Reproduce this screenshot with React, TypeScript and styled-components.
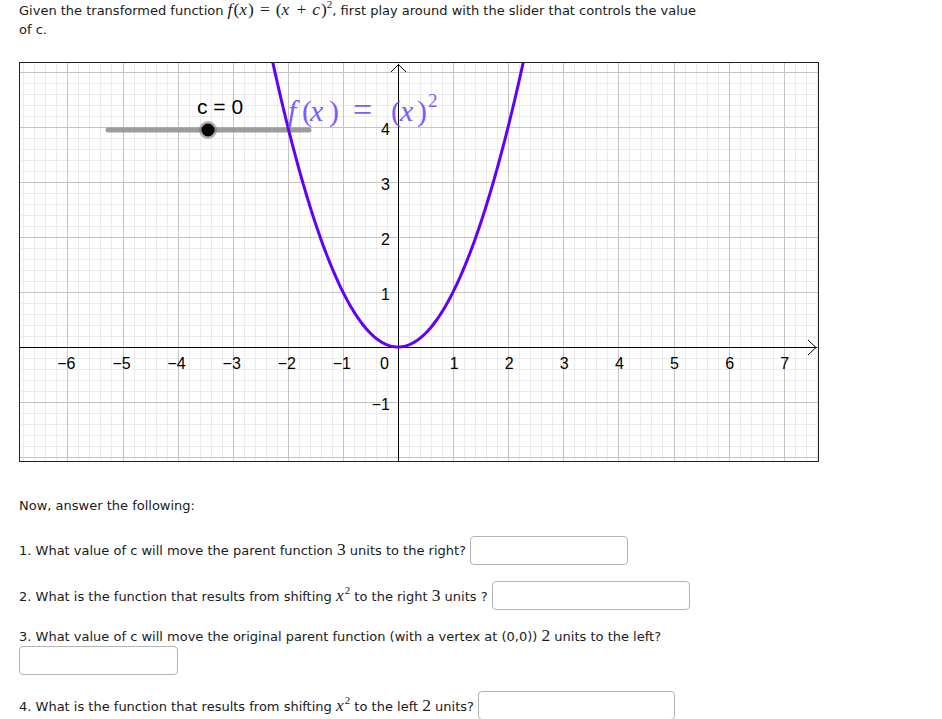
import React from 'react';
import styled, { createGlobalStyle } from 'styled-components';

const GlobalStyle = createGlobalStyle`
  html, body {
    margin: 0;
    padding: 0;
    background: #fff;
  }
  body {
    font-family: "DejaVu Sans", Verdana, sans-serif;
    font-size: 13px;
    color: #1a1a1a;
  }
`;

// graph geometry (inside the 1px border)
const W = 798;
const H = 398;
const OX = 378;
const OY = 284;
const U = 55.1;

const Page = styled.div`
  padding: 0 19px;
  width: 904px;
`;

const Para = styled.p`
  margin: 0;
  line-height: 19px;
`;

const Intro = styled(Para)`
  width: 685px;
  margin-top: -1px;
`;

const MathText = styled.span`
  font-family: "Liberation Serif", "Times New Roman", serif;
  font-size: 17.5px;
  line-height: 1;
`;

const MathVar = styled.i`
  font-family: "Liberation Serif", "Times New Roman", serif;
  font-size: 17.5px;
  line-height: 1;
  padding-right: 1px;
`;

const Op = styled.span`
  font-family: "Liberation Serif", "Times New Roman", serif;
  font-size: 17.5px;
  line-height: 1;
  margin: 0 6px;
`;

const Sup = styled.sup`
  font-family: "Liberation Serif", "Times New Roman", serif;
  font-size: 11px;
  line-height: 1;
  vertical-align: 7px;
`;

const GraphBox = styled.div`
  margin-top: 23px;
  width: ${W}px;
  height: ${H}px;
  border: 1px solid #222;
  background: #fff;
  line-height: 0;
`;

const Heading = styled(Para)`
  margin-top: 34px;
`;

const QuestionRow = styled.div<{ $stack?: boolean; $gap: number }>`
  display: flex;
  flex-direction: ${(p) => (p.$stack ? 'column' : 'row')};
  align-items: ${(p) => (p.$stack ? 'flex-start' : 'center')};
  gap: ${(p) => (p.$stack ? 0 : 4)}px;
  margin-top: ${(p) => p.$gap}px;
  line-height: 19px;
`;

const AnswerInput = styled.input<{ $w: number }>`
  width: ${(p) => p.$w}px;
  height: 29px;
  box-sizing: border-box;
  border: 1px solid #b4b4b4;
  border-radius: 4px;
  background: #fff;
  padding: 0 6px;
  margin: 0;
  font: inherit;
`;

const SANS = '"Liberation Sans", Arial, sans-serif';
const SERIF = '"Liberation Serif", "Times New Roman", serif';

const Graph: React.FC = () => {
  const step = U / 5;
  const minor: React.ReactNode[] = [];
  const major: React.ReactNode[] = [];
  for (let i = Math.ceil(-OX / step); OX + i * step <= W; i++) {
    const x = Math.round(OX + i * step) + 0.5;
    const isMajor = i % 5 === 0;
    const el = <line key={`v${i}`} x1={x} y1={0} x2={x} y2={H} stroke={isMajor ? '#c4c4c4' : '#ebebeb'} />;
    (isMajor ? major : minor).push(el);
  }
  for (let j = Math.ceil(-OY / step); OY + j * step <= H; j++) {
    const y = Math.round(OY + j * step) + 0.5;
    const isMajor = j % 5 === 0;
    const el = <line key={`h${j}`} x1={0} y1={y} x2={W} y2={y} stroke={isMajor ? '#c4c4c4' : '#ebebeb'} />;
    (isMajor ? major : minor).push(el);
  }

  const pts: string[] = [];
  for (let px = 240; px <= 520; px += 1) {
    const x = (px - OX) / U;
    const y = OY - x * x * U;
    if (y < -10) continue;
    pts.push(`${px},${y.toFixed(2)}`);
  }

  const xLabels = [-6, -5, -4, -3, -2, -1, 1, 2, 3, 4, 5, 6, 7];
  const yLabels = [3, 2, 1, -1];
  const fmt = (n: number) => (n < 0 ? `\u2212${-n}` : `${n}`);

  return (
    <svg width={W} height={H} viewBox={`0 0 ${W} ${H}`}>
      <g>{minor}</g>
      <g>{major}</g>
      {/* axes */}
      <line x1={0} y1={OY + 0.5} x2={W - 1} y2={OY + 0.5} stroke="#000" />
      <line x1={OX + 0.5} y1={1} x2={OX + 0.5} y2={H} stroke="#000" />
      <polyline points={`${W - 10},${OY - 7} ${W - 2},${OY + 0.5} ${W - 10},${OY + 8}`} fill="none" stroke="#000" />
      <polyline points={`${OX - 7},9 ${OX + 0.5},1.5 ${OX + 8},9`} fill="none" stroke="#000" />
      <g fontFamily={SANS} fontSize={16} fill="#000">
        {xLabels.map((n) => (
          <text key={`x${n}`} x={OX + n * U + (n < 0 ? -1 : 1)} y={OY + 22} textAnchor="middle">
            {fmt(n)}
          </text>
        ))}
        <text x={OX - 9} y={OY + 22} textAnchor="end">0</text>
        {yLabels.map((n) => (
          <text key={`y${n}`} x={OX - 8} y={OY - n * U + 8} textAnchor="end">
            {fmt(n)}
          </text>
        ))}
      </g>
      {/* slider */}
      <line x1={88} y1={67} x2={289} y2={67} stroke="#8c8c8c" strokeOpacity={0.85} strokeWidth={5} strokeLinecap="round" />
      <circle cx={188} cy={67} r={9} fill="#7a7a7a" fillOpacity={0.6} />
      <circle cx={188} cy={67} r={6.5} fill="#000" />
      <text x={177} y={51} fontFamily={SANS} fontSize={21} fill="#000">
        c = 0
      </text>
      {/* parabola */}
      <polyline points={pts.join(' ')} fill="none" stroke="#6200ff" strokeWidth={3} strokeLinejoin="round" />
      {/* function label */}
      <g fontFamily={SERIF} fontSize={30} fill="#7a5cff">
        <text x={268} y={58} fontStyle="italic">f</text>
        <text x={282} y={58}>(</text>
        <text x={290} y={58} fontStyle="italic">x</text>
        <text x={309} y={58}>)</text>
        <text x={333} y={58} fontSize={34}>=</text>
        <text x={371} y={58}>(</text>
        <text x={380} y={58} fontStyle="italic">x</text>
        <text x={397} y={58}>)</text>
        <text x={408} y={44} fontSize={19}>2</text>
      </g>
      <text x={OX - 8} y={OY - 4 * U + 8} textAnchor="end" fontFamily={SANS} fontSize={16} fill="#000">
        4
      </text>
    </svg>
  );
};

const App: React.FC = () => {
  return (
    <>
      <GlobalStyle />
      <Page>
        <Intro>
          Given the transformed function <MathVar>f</MathVar>
          <MathText>(</MathText>
          <MathVar>x</MathVar>
          <MathText>)</MathText>
          <Op>=</Op>
          <MathText>(</MathText>
          <MathVar>x</MathVar>
          <Op>+</Op>
          <MathVar>c</MathVar>
          <MathText>)</MathText>
          <Sup>2</Sup>, first play around with the slider that controls the value of c.
        </Intro>
        <GraphBox>
          <Graph />
        </GraphBox>
        <Heading>Now, answer the following:</Heading>
        <QuestionRow $gap={21}>
          <span>
            1. What value of c will move the parent function <MathText>3</MathText> units to the right?
          </span>
          <AnswerInput $w={158} />
        </QuestionRow>
        <QuestionRow $gap={16}>
          <span>
            2. What is the function that results from shifting <MathVar>x</MathVar>
            <Sup>2</Sup> to the right <MathText>3</MathText> units ?
          </span>
          <AnswerInput $w={198} />
        </QuestionRow>
        <QuestionRow $gap={17} $stack>
          <span>
            3. What value of c will move the original parent function (with a vertex at (0,0)){' '}
            <MathText>2</MathText> units to the left?
          </span>
          <AnswerInput $w={159} />
        </QuestionRow>
        <QuestionRow $gap={16}>
          <span>
            4. What is the function that results from shifting <MathVar>x</MathVar>
            <Sup>2</Sup> to the left <MathText>2</MathText> units?
          </span>
          <AnswerInput $w={197} />
        </QuestionRow>
      </Page>
    </>
  );
};

export default App;
